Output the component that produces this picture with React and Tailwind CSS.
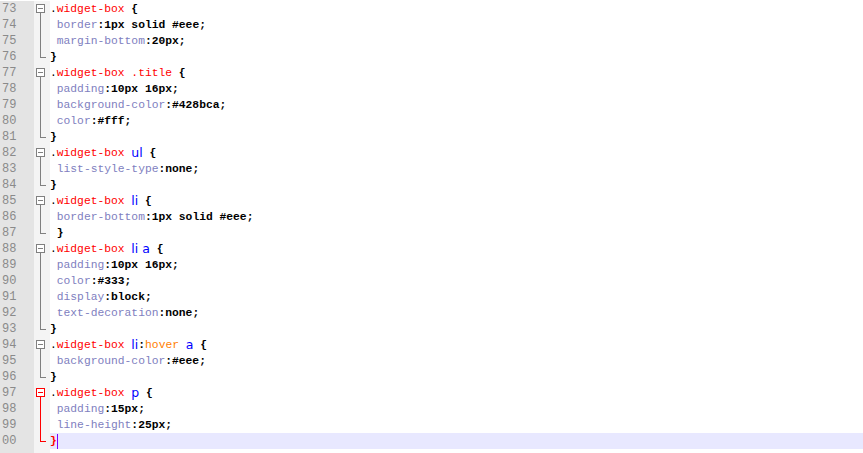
import React from 'react'

// Token colours follow the Notepad++ default CSS style
const STYLE = {
  dot: 'text-[#000000]',
  cls: 'text-[#ff0000]',
  tag: 'text-[#0000ff] font-["DejaVu_Sans",sans-serif] text-[12.5px]',
  pseudo: 'text-[#ff8000]',
  prop: 'text-[#8080c0]',
  val: 'text-[#000000] font-bold',
  op: 'text-[#000000] font-bold',
  red: 'text-[#ff0000] font-bold',
}

// fold: open | mid | end ; active = red block
const LINES = [
  { n: 73, fold: 'open', t: [['dot', '.'], ['cls', 'widget-box'], ['op', ' {']] },
  { n: 74, fold: 'mid', t: [['op', ' '], ['prop', 'border'], ['op', ':'], ['val', '1px solid #eee'], ['op', ';']] },
  { n: 75, fold: 'mid', t: [['op', ' '], ['prop', 'margin-bottom'], ['op', ':'], ['val', '20px'], ['op', ';']] },
  { n: 76, fold: 'end', t: [['op', '}']] },
  { n: 77, fold: 'open', t: [['dot', '.'], ['cls', 'widget-box .title'], ['op', ' {']] },
  { n: 78, fold: 'mid', t: [['op', ' '], ['prop', 'padding'], ['op', ':'], ['val', '10px 16px'], ['op', ';']] },
  { n: 79, fold: 'mid', t: [['op', ' '], ['prop', 'background-color'], ['op', ':'], ['val', '#428bca'], ['op', ';']] },
  { n: 80, fold: 'mid', t: [['op', ' '], ['prop', 'color'], ['op', ':'], ['val', '#fff'], ['op', ';']] },
  { n: 81, fold: 'end', t: [['op', '}']] },
  { n: 82, fold: 'open', t: [['dot', '.'], ['cls', 'widget-box '], ['tag', 'ul'], ['op', ' {']] },
  { n: 83, fold: 'mid', t: [['op', ' '], ['prop', 'list-style-type'], ['op', ':'], ['val', 'none'], ['op', ';']] },
  { n: 84, fold: 'end', t: [['op', '}']] },
  { n: 85, fold: 'open', t: [['dot', '.'], ['cls', 'widget-box '], ['tag', 'li'], ['op', ' {']] },
  { n: 86, fold: 'mid', t: [['op', ' '], ['prop', 'border-bottom'], ['op', ':'], ['val', '1px solid #eee'], ['op', ';']] },
  { n: 87, fold: 'end', t: [['op', ' }']] },
  { n: 88, fold: 'open', t: [['dot', '.'], ['cls', 'widget-box '], ['tag', 'li a'], ['op', ' {']] },
  { n: 89, fold: 'mid', t: [['op', ' '], ['prop', 'padding'], ['op', ':'], ['val', '10px 16px'], ['op', ';']] },
  { n: 90, fold: 'mid', t: [['op', ' '], ['prop', 'color'], ['op', ':'], ['val', '#333'], ['op', ';']] },
  { n: 91, fold: 'mid', t: [['op', ' '], ['prop', 'display'], ['op', ':'], ['val', 'block'], ['op', ';']] },
  { n: 92, fold: 'mid', t: [['op', ' '], ['prop', 'text-decoration'], ['op', ':'], ['val', 'none'], ['op', ';']] },
  { n: 93, fold: 'end', t: [['op', '}']] },
  { n: 94, fold: 'open', t: [['dot', '.'], ['cls', 'widget-box '], ['tag', 'li'], ['op', ':'], ['pseudo', 'hover'], ['op', ' '], ['tag', 'a'], ['op', ' {']] },
  { n: 95, fold: 'mid', t: [['op', ' '], ['prop', 'background-color'], ['op', ':'], ['val', '#eee'], ['op', ';']] },
  { n: 96, fold: 'end', t: [['op', '}']] },
  { n: 97, fold: 'open', active: true, t: [['dot', '.'], ['cls', 'widget-box '], ['tag', 'p'], ['op', ' {']] },
  { n: 98, fold: 'mid', active: true, t: [['op', ' '], ['prop', 'padding'], ['op', ':'], ['val', '15px'], ['op', ';']] },
  { n: 99, fold: 'mid', active: true, t: [['op', ' '], ['prop', 'line-height'], ['op', ':'], ['val', '25px'], ['op', ';']] },
  { n: '00', fold: 'end', active: true, current: true, t: [['red', '}']] },
]

function Fold({ kind, active }) {
  const c = active ? 'bg-[#ff0000]' : 'bg-[#808080]'
  const b = active ? 'border-[#ff0000]' : 'border-[#808080]'
  if (kind === 'open') {
    return (
      <div className="relative w-[16px] h-[16px]">
        <div className={`absolute left-[2px] top-[3px] w-[9px] h-[9px] border ${b} bg-white flex items-center justify-center`}>
          <div className={`w-[5px] h-px ${c}`} />
        </div>
        <div className={`absolute left-[6px] top-[12px] w-px h-[4px] ${c}`} />
      </div>
    )
  }
  if (kind === 'mid') {
    return (
      <div className="relative w-[16px] h-[16px]">
        <div className={`absolute left-[6px] top-0 w-px h-[16px] ${c}`} />
      </div>
    )
  }
  return (
    <div className="relative w-[16px] h-[16px]">
      <div className={`absolute left-[6px] top-0 w-px h-[9px] ${c}`} />
      <div className={`absolute left-[6px] top-[8px] w-[6px] h-px ${c}`} />
    </div>
  )
}

export default function App() {
  return (
    <div className="w-[863px] h-[453px] bg-white overflow-hidden flex flex-col pt-px font-['Liberation_Mono',monospace] text-[11.3px]">
      {LINES.map((line) => (
        <div key={line.n} className="flex h-[16px] items-stretch shrink-0">
          {/* line number margin */}
          <div className="w-[34px] bg-[#e4e4e4] text-[#8a8a8a] text-[12px] leading-[16px] pl-[2px] font-['Liberation_Mono',monospace]">
            {line.n}
          </div>
          {/* fold margin */}
          <div className="bg-[#f4f4f4]">
            <Fold kind={line.fold} active={line.active} />
          </div>
          {/* code */}
          <div className={`flex-1 flex items-center whitespace-pre leading-[16px] ${line.current ? 'bg-[#e8e8ff]' : ''}`}>
            {line.t.map(([k, s], i) => (
              <span key={i} className={STYLE[k]}>{s}</span>
            ))}
            {line.current && <span className="w-px h-[15px] bg-[#8000ff]" />}
          </div>
        </div>
      ))}
      <div className="flex flex-1">
        <div className="w-[34px] bg-[#e4e4e4]" />
        <div className="w-[16px] bg-[#f4f4f4]" />
      </div>
    </div>
  )
}
